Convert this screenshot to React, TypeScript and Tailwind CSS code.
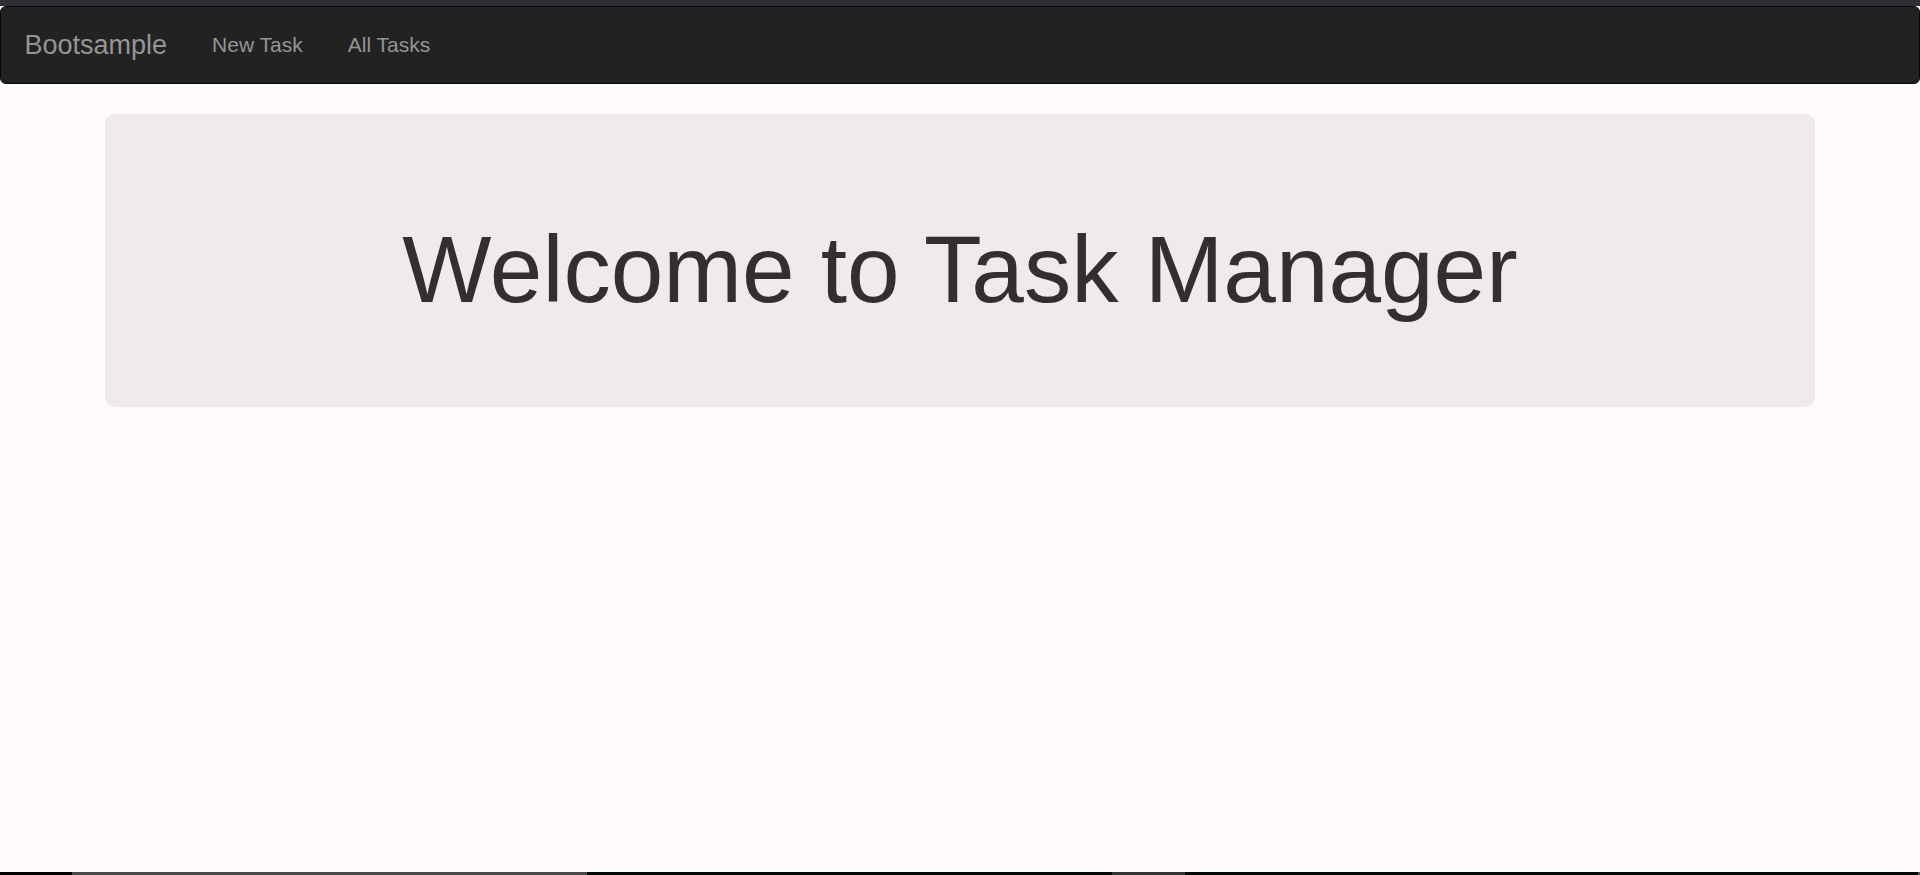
import React from 'react';

const App: React.FC = () => {
  return (
    <div className="flex flex-col h-screen bg-[#fffbfa] overflow-hidden" style={{ fontFamily: '"Liberation Sans", Arial, sans-serif' }}>
      <div className="h-[6px] bg-[#2f2e33] shrink-0" />

      <nav className="h-[78px] shrink-0 flex items-start bg-[#222] border-[1.5px] border-[#080808] rounded-[6px] px-[1px]">
        <a className="px-[22.5px] pt-[23px] pb-[22px] text-[27px] leading-[30px] text-[#959595]">Bootsample</a>
        <ul className="flex">
          <li>
            <a className="block px-[22.5px] pt-[23px] pb-[22px] text-[21px] leading-[30px] text-[#959595]">New Task</a>
          </li>
          <li>
            <a className="block px-[22.5px] pt-[23px] pb-[22px] text-[21px] leading-[30px] text-[#959595]">All Tasks</a>
          </li>
        </ul>
      </nav>

      <main className="flex-1 pt-[30px]">
        <div className="w-[1710px] mx-auto bg-[#eeebea] rounded-[9px] px-[90px] pt-[72px] pb-[72px] text-center">
          <h1 className="mt-[31px] mb-[14px] text-[94.5px] leading-[104px] text-[#332f2e]">Welcome to Task Manager</h1>
        </div>
      </main>

      <div className="h-[3px] shrink-0 flex bg-[#030a0a]">
        <div className="w-[72px] bg-black" />
        <div className="w-[515px] bg-[#4a4848]" />
        <div className="w-[525px]" />
        <div className="w-[73px] bg-[#333535]" />
        <div className="flex-1" />
        <div className="w-[2px] bg-[#555]" />
      </div>
    </div>
  );
};

export default App;
